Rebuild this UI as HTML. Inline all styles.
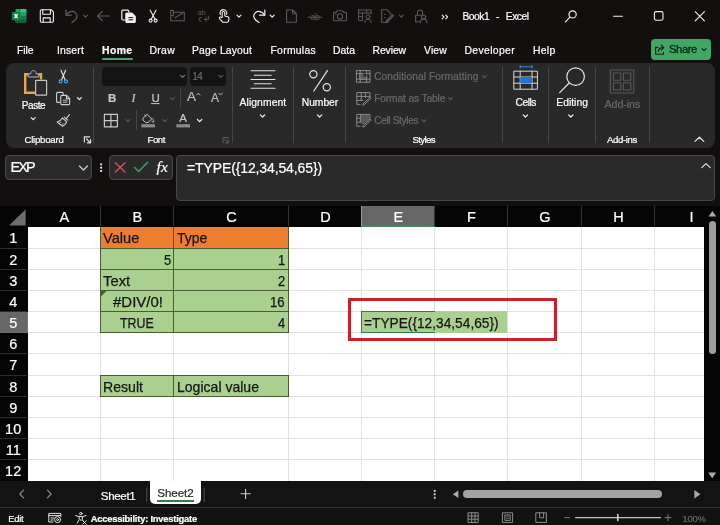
<!DOCTYPE html>
<html>
<head>
<meta charset="utf-8">
<title>Book1 - Excel</title>
<style>
*{box-sizing:border-box;margin:0;padding:0}
html,body{width:720px;height:525px;overflow:hidden;background:#120f0e;font-family:"Liberation Sans",sans-serif;color:#fff}
.abs{position:absolute}
#root{position:relative;width:720px;height:525px;overflow:hidden;background:#120f0e}
.t{position:absolute;white-space:pre;line-height:1;-webkit-text-stroke-width:0.2px}
.sep{position:absolute;width:1px;background:#464646;top:67px;height:76px}
.box{position:absolute;background:#2a2a2a;border:1px solid #484848;border-radius:4px}
</style>
</head>
<body>
<div id="root">
<!-- TITLE ICONS -->
<svg class="abs" style="left:0;top:0" width="720" height="34" viewBox="0 0 720 34" fill="none" stroke-linecap="round" stroke-linejoin="round">
  <!-- excel logo -->
  <rect x="15.5" y="9" width="10.8" height="13.6" rx="1" fill="#21a366" stroke="none"/>
  <rect x="20.8" y="9" width="5.5" height="3.5" fill="#33c481" stroke="none"/>
  <rect x="20.8" y="12.5" width="5.5" height="3.4" fill="#21a366" stroke="none"/>
  <rect x="20.8" y="15.9" width="5.5" height="3.4" fill="#107c41" stroke="none"/>
  <rect x="15.5" y="19.3" width="10.8" height="3.3" fill="#185c37" stroke="none"/>
  <rect x="11.8" y="12" width="8.6" height="8.2" rx="0.8" fill="#107c41" stroke="none"/>
  <path d="M14.5 14 L17.7 18.2 M17.7 14 L14.5 18.2" stroke="#fff" stroke-width="1.3" stroke-linecap="butt"/>
  <!-- save -->
  <g stroke="#f2f2f2" stroke-width="1.1">
    <path d="M40.3 10.9 a1.2 1.2 0 0 1 1.2 -1.2 h9.6 l2.3 2.3 v9 a1.2 1.2 0 0 1 -1.2 1.2 h-10.7 a1.2 1.2 0 0 1 -1.2 -1.2 z"/>
    <path d="M42.8 9.8 v4.4 h7.6 v-4.4"/>
    <path d="M43.2 22.1 v-4.2 h7 v4.2"/>
  </g>
  <!-- undo (dim) -->
  <g stroke="#5e5e5e" stroke-width="1.2">
    <path d="M66 10 v5.2 h5.2"/>
    <path d="M66.3 15 c2.2 -3.6 6.4 -4.6 9 -2.4 c3 2.6 1.6 6.2 -0.8 8 l-2.7 2"/>
    <path d="M83.4 15.2 l2 2 l2 -2"/>
  </g>
  <!-- back arrow (dim) -->
  <g stroke="#5e5e5e" stroke-width="1.2">
    <path d="M97.6 16 h12 M102.3 11.3 l-4.7 4.7 l4.7 4.7"/>
  </g>
  <!-- copy/paste -->
  <g stroke="#f2f2f2" stroke-width="1.2">
    <path d="M125 20 h-2 a1.2 1.2 0 0 1 -1.2 -1.2 v-7.4 a1.2 1.2 0 0 1 1.2 -1.2 h4.6 a1.2 1.2 0 0 1 1.2 1.2 v0.6"/>
    <path d="M126.8 13.2 h5.2 l3.2 3.2 v5 a0.9 0.9 0 0 1 -0.9 0.9 h-7.5 a0.9 0.9 0 0 1 -0.9 -0.9 v-7.3 a0.9 0.9 0 0 1 0.9 -0.9 z" fill="#f2f2f2"/>
    <path d="M128.8 17.6 h4 M128.8 19.8 h4" stroke="#111" stroke-width="1"/>
  </g>
  <!-- scissors -->
  <g stroke="#f2f2f2" stroke-width="1.1">
    <path d="M150.2 10.2 l4.8 9 M156 10.2 l-4.8 9"/>
    <circle cx="150.6" cy="20.6" r="1.5"/>
    <circle cx="155.6" cy="20.6" r="1.5"/>
  </g>
  <!-- picture/chart dim -->
  <g stroke="#5a5a5a" stroke-width="1.1">
    <path d="M174.5 12.3 h9.8 v8.4 h-13.6 v-4"/>
    <path d="M170.8 15.6 v-5.2 h2.6 v5.2 z"/>
    <path d="M175 17.8 l8 -5"/>
  </g>
  <!-- abc dim -->
  <text x="197.4" y="15.4" font-family="Liberation Sans, sans-serif" font-size="7.5" fill="#5a5a5a" stroke="none">ab</text>
  <g stroke="#5a5a5a" stroke-width="1">
    <path d="M204.6 19.4 h3.8 v-3.4 M204.4 19.4 l2 -1.8 M204.4 19.4 l2 1.8"/>
    <path d="M201 17.4 a1.9 1.9 0 1 0 0 3.8"/>
  </g>
  <!-- touch -->
  <g stroke="#f2f2f2" stroke-width="1.1">
    <path d="M222.2 17.4 v-4.6 a1.3 1.3 0 0 1 2.6 0 v3.2 l3 0.7 a1.6 1.6 0 0 1 1.2 1.8 l-0.5 2.6 a1.6 1.6 0 0 1 -1.6 1.2 h-3.2 a2 2 0 0 1 -1.5 -0.7 l-2.6 -3 a1 1 0 0 1 1.5 -1.3 z"/>
    <path d="M220.4 14.6 a3.4 3.4 0 1 1 6.2 -0.4"/>
    <path d="M237 15.2 l2 2 l2 -2"/>
  </g>
  <!-- redo -->
  <g stroke="#f2f2f2" stroke-width="1.2">
    <path d="M264.8 10 v5.2 h-5.2"/>
    <path d="M264.5 15 c-2.2 -3.6 -6.4 -4.6 -9 -2.4 c-3 2.6 -1.6 6.2 0.8 8 l2.7 2"/>
    <path d="M270.2 15.2 l2 2 l2 -2"/>
  </g>
  <!-- new doc dim -->
  <g stroke="#5a5a5a" stroke-width="1.1">
    <path d="M286.6 10 h6.2 l3.6 3.6 v8.6 h-9.8 z M292.6 10.2 v3.6 h3.6"/>
  </g>
  <!-- strikethrough dim -->
  <text x="310.4" y="20.4" font-family="Liberation Sans, sans-serif" font-size="8.5" fill="#5a5a5a" stroke="none">ab</text>
  <path d="M308.4 17.2 h13.4" stroke="#5a5a5a" stroke-width="1"/>
  <!-- camera dim -->
  <g stroke="#5a5a5a" stroke-width="1.1">
    <path d="M333.6 12.4 h2.6 l1 -1.6 h5.2 l1 1.6 h3 v8.4 h-12.8 z"/>
    <circle cx="340" cy="16.4" r="2.6"/>
    <path d="M335.4 14.3 h0.6"/>
  </g>
  <!-- table people dim -->
  <g stroke="#5a5a5a" stroke-width="1">
    <path d="M358.6 10 h12.6 v4 M358.6 10 v10.6 h4 M358.6 13 h12.6 M362.4 13 v7.6 M366.6 10 v3 M358.6 16.6 h4"/>
    <circle cx="368" cy="16.8" r="2"/>
    <path d="M364.6 22.6 a3.4 3.4 0 0 1 6.8 0"/>
  </g>
  <!-- doc pen dim -->
  <g stroke="#5a5a5a" stroke-width="1.1">
    <path d="M388 22.2 h-6.4 v-12.4 h5.6 l3.4 3.6 v1"/>
    <path d="M392.6 14.6 l-6.4 6.4 l-0.6 1.6 l1.8 -0.6 l6.2 -6.4 z"/>
    <path d="M384.6 14.4 h0.4 M384.6 17.6 h0.4"/>
    <path d="M399.4 15.2 l2 2 l2 -2"/>
  </g>
  <!-- lock person dim -->
  <g stroke="#5a5a5a" stroke-width="1.1">
    <path d="M419.4 21.8 h-3.8 v-6.6 h7.4 M417.4 15 v-2.4 a2.6 2.6 0 0 1 5.2 0 v1.6"/>
    <circle cx="423.6" cy="17" r="2"/>
    <path d="M420.2 22.6 a3.4 3.4 0 0 1 6.8 0"/>
  </g>
  <!-- >> -->
  <g stroke="#f2f2f2" stroke-width="1.1">
    <path d="M442.2 15.2 l1.8 1.8 l-1.8 1.8 M445.8 15.2 l1.8 1.8 l-1.8 1.8"/>
  </g>
  <!-- search -->
  <g stroke="#f2f2f2" stroke-width="1.2">
    <circle cx="572.6" cy="14.4" r="3.6"/>
    <path d="M570 17.2 l-4.6 4.6"/>
  </g>
  <!-- window controls -->
  <g stroke="#f2f2f2" stroke-width="1.1">
    <path d="M613.6 16.2 h8.8"/>
    <rect x="654.4" y="11.6" width="8.6" height="8.6" rx="1.6"/>
    <path d="M695.2 11.6 l9.2 9.2 M704.4 11.6 l-9.2 9.2"/>
  </g>
</svg>
<!-- TAB UNDERLINE / SHARE -->
<div class="abs" style="left:102px;top:57.5px;width:31px;height:2px;background:#4ea66e;border-radius:1px"></div>
<div class="abs" style="left:651px;top:39px;width:60px;height:21px;background:#41a663;border-radius:4px"></div>
<!-- RIBBON -->
<div class="abs" style="left:5.5px;top:63px;width:709.5px;height:85px;background:#292929;border-radius:8px"></div>
<div class="sep" style="left:93px"></div>
<div class="sep" style="left:232px"></div>
<div class="sep" style="left:293px"></div>
<div class="sep" style="left:345px"></div>
<div class="sep" style="left:502px"></div>
<div class="sep" style="left:548px"></div>
<div class="sep" style="left:595px"></div>
<div class="sep" style="left:649px"></div>
<div class="abs" style="left:101.5px;top:67px;width:85px;height:19px;background:#131313;border-radius:4px"></div>
<div class="abs" style="left:190px;top:67px;width:35.5px;height:19px;background:#131313;border-radius:4px"></div>
<!-- RIBBON ICONS -->
<svg class="abs" style="left:0;top:34px" width="720" height="120" viewBox="0 34 720 120" fill="none" stroke-linecap="round" stroke-linejoin="round">
  <!-- share icon -->
  <g stroke="#0c2414" stroke-width="1.1">
    <path d="M658 47.4 h-2.4 v6.8 h7.8 v-2"/>
    <path d="M658.2 51.6 c0.4 -2.8 2.2 -4 4.6 -4 M661.2 45 l2.6 2.6 l-2.6 2.6"/>
    <path d="M702 48.6 l2.1 2.1 l2.1 -2.1"/>
  </g>
  <!-- paste -->
  <g>
    <path d="M28.4 74.2 h-3.2 v18.6 h10 M38.8 74.2 h2.2 v5.4" stroke="#e2aa4c" stroke-width="2.4" stroke-linejoin="miter" stroke-linecap="butt"/>
    <path d="M28.2 76.6 v-2.6 h2.4 c0.2 -2 1.2 -3.4 2.9 -3.4 c1.7 0 2.7 1.4 2.9 3.4 h2.4 v2.6 z" stroke="#b8b8b8" stroke-width="1" fill="#2d2d2d"/>
    <rect x="35.6" y="80.4" width="11" height="14.8" rx="0.6" fill="#2b2b2b" stroke="#c4c4c4" stroke-width="1.2"/>
  </g>
  <path d="M31.2 117.6 l2 2 l2 -2" stroke="#f2f2f2" stroke-width="1.2"/>
  <!-- cut -->
  <g stroke-width="1.2">
    <path d="M61 70.2 l4 9.6 M65.6 70.2 l-4 9.6" stroke="#dcdcdc"/>
    <circle cx="60.6" cy="81.4" r="1.5" stroke="#4aa3e0"/>
    <circle cx="66" cy="81.4" r="1.5" stroke="#4aa3e0"/>
  </g>
  <!-- copy -->
  <g stroke="#d0d0d0" stroke-width="1.1">
    <path d="M59.6 102.4 h-2 a1 1 0 0 1 -1 -1 v-8 a1 1 0 0 1 1 -1 h4.6 a1 1 0 0 1 1 1 v1"/>
    <path d="M61.6 95.4 h5 l3 3 v5.4 a0.8 0.8 0 0 1 -0.8 0.8 h-7.2 a0.8 0.8 0 0 1 -0.8 -0.8 v-7.6 a0.8 0.8 0 0 1 0.8 -0.8 z M66.4 95.6 v3 h3"/>
    <path d="M63.4 100.2 h3.6 M63.4 102.2 h3.6" stroke-width="0.9"/>
    <path d="M77.4 97.6 l2 2 l2 -2" stroke="#f2f2f2" stroke-width="1.2"/>
  </g>
  <!-- format painter -->
  <g stroke="#d0d0d0" stroke-width="1.1">
    <path d="M69.4 114.6 l-3.4 4.2 M64.2 117.2 l3.6 3 M62.4 118 l4.2 3.6 c-0.6 2 -2 3.8 -4.4 4.6 l-5 -4.2 c2.4 -0.6 4 -2 5.2 -4 z"/>
    <path d="M59.4 123.4 l1.6 -1.4 M61.6 125 l1.4 -1.6" stroke-width="0.8"/>
  </g>
  <!-- clipboard launcher -->
  <g stroke="#e0e0e0" stroke-width="1.2">
    <path d="M89.6 136.8 h-5.2 v5.2 M86.6 139 l3.6 3.6 M90.6 139.6 v3.2 h-3.2"/>
  </g>
  <!-- font launcher dim -->
  <g stroke="#606060" stroke-width="1">
    <path d="M228 137.6 h-5 v5 M224.8 139.4 l3.4 3.4 M228.4 140.2 v2.8 h-2.8"/>
  </g>
  <!-- font box chevrons -->
  <g stroke="#7a7a7a" stroke-width="1.1">
    <path d="M180.6 75.4 l2 2 l2 -2"/>
    <path d="M218.8 75.4 l2 2 l2 -2" stroke="#5c5c5c"/>
  </g>
  <!-- U underline, chevrons -->
  <path d="M151.4 103.6 h7.8" stroke="#c8c8c8" stroke-width="1"/>
  <g stroke="#5c5c5c" stroke-width="1.1">
    <path d="M170.4 97.6 l2 2 l2 -2"/>
    <path d="M125.8 119.6 l2 2 l2 -2"/>
    <path d="M162.8 119.6 l2 2 l2 -2"/>
  </g>
  <path d="M197.4 119.4 l2.2 2.2 l2.2 -2.2" stroke="#f2f2f2" stroke-width="1.3"/>
  <path d="M180.5 89 v18.6 M136.5 110.6 v19.4" stroke="#464646" stroke-width="1"/>
  <!-- A^ Av carets -->
  <g stroke="#bdbdbd" stroke-width="1">
    <path d="M196.6 95 l1.7 -1.8 l1.7 1.8"/>
    <path d="M218.8 93.2 l1.7 1.8 l1.7 -1.8"/>
  </g>
  <!-- borders -->
  <g stroke="#c8c8c8" stroke-width="1.2">
    <rect x="104.4" y="114.4" width="13" height="12.4"/>
    <path d="M110.9 114.4 v12.4 M104.4 120.6 h13"/>
  </g>
  <!-- fill bucket -->
  <g stroke="#c8c8c8" stroke-width="1">
    <path d="M147.4 114.6 l4.4 4.4 l-3.8 3.6 h-2.4 l-2.6 -2.6 v-1.4 z M145.8 116.2 l-1 -1.4"/>
    <path d="M152.6 118.6 c1.2 1.4 1.6 2.4 1.2 3.2 c-0.6 0.6 -1.6 0.4 -1.8 -0.6"/>
  </g>
  <rect x="141.4" y="124.2" width="13.6" height="3.2" fill="#8a8a8a"/>
  <rect x="176.4" y="124.2" width="13.6" height="3.2" fill="#8a8a8a"/>
  <!-- alignment -->
  <g stroke="#e4e4e4" stroke-width="1.1">
    <path d="M251 70.8 h24 M254.4 75.2 h16.8 M251 79.5 h24 M254.4 83.8 h16.8 M251 88.2 h24"/>
    <path d="M260.4 114.8 l2.2 2.2 l2.2 -2.2" stroke="#f2f2f2" stroke-width="1.2"/>
    <path d="M317.4 114.8 l2.2 2.2 l2.2 -2.2" stroke="#f2f2f2" stroke-width="1.2"/>
    <path d="M523.2 114.8 l2.2 2.2 l2.2 -2.2" stroke="#f2f2f2" stroke-width="1.2"/>
    <path d="M568.6 114.8 l2.2 2.2 l2.2 -2.2" stroke="#f2f2f2" stroke-width="1.2"/>
  </g>
  <!-- percent -->
  <g stroke="#e4e4e4" stroke-width="1.2">
    <circle cx="313.4" cy="74.2" r="3.6"/>
    <circle cx="326.8" cy="87.2" r="3.6"/>
    <path d="M327.4 70.6 l-13.6 20.4"/>
  </g>
  <!-- styles icons (dim) -->
  <g stroke="#8a8a8a" stroke-width="1">
    <rect x="356.8" y="70.6" width="13.2" height="11.6"/>
    <path d="M356.8 73.6 h13.2 M356.8 79.2 h13.2 M360.2 70.6 v11.6 M366.6 70.6 v11.6"/>
    <rect x="360.2" y="73.6" width="6.4" height="5.6" fill="#5a5a5a"/>
    <path d="M363.4 73.6 h3.2 v2.8 h-3.2 z" fill="#2a2a2a" stroke="none"/>
    <path d="M370 98.4 v-5.8 h-13.2 v11.8 h3.4 M356.8 96.4 h13.2 M356.8 100.4 h6 M361.2 92.6 v8 M365.6 92.6 v5"/>
    <path d="M369.6 97.6 l-6.4 6.2 l-0.6 1.4 l1.6 -0.4 l6.4 -6.2 z" fill="#2a2a2a"/>
    <path d="M370 120.2 v-5.8 h-13.2 v11.8 h3.4 M356.8 118.2 h4 M356.8 122.2 h3 M360.4 114.4 v8"/>
    <path d="M361 115 h8.4 v4.4 l-5.6 4.6 h-2.8 z" fill="#5a5a5a" stroke="none"/>
    <path d="M369.6 119.4 l-6.4 6.2 l-0.6 1.4 l1.6 -0.4 l6.4 -6.2 z" fill="#2a2a2a"/>
  </g>
  <g stroke="#606060" stroke-width="1.1">
    <path d="M482.4 75.6 l2 2 l2 -2"/>
    <path d="M448.4 97.6 l2 2 l2 -2"/>
    <path d="M422 119.8 l2 2 l2 -2"/>
  </g>
  <!-- cells -->
  <g stroke="#d8d8d8" stroke-width="1">
    <rect x="514.2" y="71.2" width="23.2" height="18"/>
    <path d="M514.2 77 h23.2 M514.2 83.2 h23.2 M520.2 71.2 v18 M532 71.2 v18"/>
    <rect x="520.2" y="77" width="11.8" height="6.2" fill="#1e78d2" stroke="none"/>
    <path d="M520.2 66.8 h11.8 M520.2 65.4 v2.8 M532 65.4 v2.8" stroke="#3a8ee0" stroke-width="0.9"/>
  </g>
  <!-- editing magnifier -->
  <g stroke="#e4e4e4" stroke-width="1.2">
    <circle cx="575.6" cy="76.6" r="8.8"/>
    <path d="M569.2 83 l-9.6 9.6"/>
  </g>
  <!-- add-ins dim -->
  <g stroke="#5a5a5a" stroke-width="1.1">
    <rect x="610.4" y="70" width="23.4" height="23"/>
    <rect x="613.4" y="73" width="7.4" height="7.2"/>
    <rect x="623.4" y="73" width="7.4" height="7.2"/>
    <rect x="613.4" y="82.8" width="7.4" height="7.2"/>
    <rect x="623.4" y="82.8" width="7.4" height="7.2"/>
  </g>
  <!-- collapse -->
  <path d="M695 141.4 l4.4 -4.2 l4.4 4.2" stroke="#e4e4e4" stroke-width="1.2"/>
</svg>
<!-- FORMULA BAR -->
<div class="box" style="left:5px;top:155px;width:87px;height:25px"></div>
<div class="box" style="left:109px;top:155px;width:64px;height:25px"></div>
<div class="box" style="left:176px;top:155px;width:538.5px;height:46px"></div>
<!-- GRID -->
<div class="abs" style="left:0;top:206px;width:720px;height:275px;background:#050505"></div>
<div class="abs" style="left:27.5px;top:227px;width:676px;height:253.6px;background:#fff"></div>
<div class="abs" style="left:0;top:248px;width:27px;height:1px;background:#2c2c2c"></div>
<div class="abs" style="left:0;top:269px;width:27px;height:1px;background:#2c2c2c"></div>
<div class="abs" style="left:0;top:290px;width:27px;height:1px;background:#2c2c2c"></div>
<div class="abs" style="left:0;top:311px;width:27px;height:1px;background:#2c2c2c"></div>
<div class="abs" style="left:0;top:332px;width:27px;height:1px;background:#2c2c2c"></div>
<div class="abs" style="left:0;top:353px;width:27px;height:1px;background:#2c2c2c"></div>
<div class="abs" style="left:0;top:375px;width:27px;height:1px;background:#2c2c2c"></div>
<div class="abs" style="left:0;top:396px;width:27px;height:1px;background:#2c2c2c"></div>
<div class="abs" style="left:0;top:417px;width:27px;height:1px;background:#2c2c2c"></div>
<div class="abs" style="left:0;top:438px;width:27px;height:1px;background:#2c2c2c"></div>
<div class="abs" style="left:0;top:459px;width:27px;height:1px;background:#2c2c2c"></div>
<div class="abs" style="left:361px;top:206px;width:74px;height:21px;background:#676767;border-bottom:1px solid #3f8f63"></div>
<div class="abs" style="left:0;top:312px;width:28px;height:21px;background:#676767;border-right:1px solid #3f8f63"></div>
<svg class="abs" style="left:0;top:206px" width="28" height="21"><path d="M25.6 3.4 V19.4 H9 Z" fill="#6e6e6e"/></svg>
<div class="abs" style="left:100px;top:206px;width:1px;height:20px;background:#333"></div>
<div class="abs" style="left:173px;top:206px;width:1px;height:20px;background:#333"></div>
<div class="abs" style="left:288px;top:206px;width:1px;height:20px;background:#333"></div>
<div class="abs" style="left:361px;top:206px;width:1px;height:20px;background:#9a9a9a"></div>
<div class="abs" style="left:434px;top:206px;width:1px;height:20px;background:#333"></div>
<div class="abs" style="left:507px;top:206px;width:1px;height:20px;background:#333"></div>
<div class="abs" style="left:581px;top:206px;width:1px;height:20px;background:#333"></div>
<div class="abs" style="left:654px;top:206px;width:1px;height:20px;background:#333"></div>
<div class="abs" style="left:100px;top:227px;width:1px;height:254px;background:#e1e1e1"></div>
<div class="abs" style="left:173px;top:227px;width:1px;height:254px;background:#e1e1e1"></div>
<div class="abs" style="left:288px;top:227px;width:1px;height:254px;background:#e1e1e1"></div>
<div class="abs" style="left:361px;top:227px;width:1px;height:254px;background:#e1e1e1"></div>
<div class="abs" style="left:434px;top:227px;width:1px;height:254px;background:#e1e1e1"></div>
<div class="abs" style="left:507px;top:227px;width:1px;height:254px;background:#e1e1e1"></div>
<div class="abs" style="left:581px;top:227px;width:1px;height:254px;background:#e1e1e1"></div>
<div class="abs" style="left:654px;top:227px;width:1px;height:254px;background:#e1e1e1"></div>
<div class="abs" style="left:28px;top:248px;width:676px;height:1px;background:#e1e1e1"></div>
<div class="abs" style="left:28px;top:269px;width:676px;height:1px;background:#e1e1e1"></div>
<div class="abs" style="left:28px;top:290px;width:676px;height:1px;background:#e1e1e1"></div>
<div class="abs" style="left:28px;top:311px;width:676px;height:1px;background:#e1e1e1"></div>
<div class="abs" style="left:28px;top:332px;width:676px;height:1px;background:#e1e1e1"></div>
<div class="abs" style="left:28px;top:353px;width:676px;height:1px;background:#e1e1e1"></div>
<div class="abs" style="left:28px;top:375px;width:676px;height:1px;background:#e1e1e1"></div>
<div class="abs" style="left:28px;top:396px;width:676px;height:1px;background:#e1e1e1"></div>
<div class="abs" style="left:28px;top:417px;width:676px;height:1px;background:#e1e1e1"></div>
<div class="abs" style="left:28px;top:438px;width:676px;height:1px;background:#e1e1e1"></div>
<div class="abs" style="left:28px;top:459px;width:676px;height:1px;background:#e1e1e1"></div>
<div class="abs" style="left:100px;top:227px;width:74px;height:22px;background:#ed7d31;border:1px solid #4a5c33;border-top:none;border-bottom-color:#8f7a3c"></div>
<div class="abs" style="left:173px;top:227px;width:116px;height:22px;background:#ed7d31;border:1px solid #4a5c33;border-top:none;border-bottom-color:#8f7a3c"></div>
<div class="abs" style="left:100px;top:248px;width:74px;height:22px;background:#a9d08e;border:1px solid #4a5c33"></div>
<div class="abs" style="left:173px;top:248px;width:116px;height:22px;background:#a9d08e;border:1px solid #4a5c33"></div>
<div class="abs" style="left:100px;top:269px;width:74px;height:22px;background:#a9d08e;border:1px solid #4a5c33"></div>
<div class="abs" style="left:173px;top:269px;width:116px;height:22px;background:#a9d08e;border:1px solid #4a5c33"></div>
<div class="abs" style="left:100px;top:290px;width:74px;height:22px;background:#a9d08e;border:1px solid #4a5c33"></div>
<div class="abs" style="left:173px;top:290px;width:116px;height:22px;background:#a9d08e;border:1px solid #4a5c33"></div>
<div class="abs" style="left:100px;top:311px;width:74px;height:22px;background:#a9d08e;border:1px solid #4a5c33"></div>
<div class="abs" style="left:173px;top:311px;width:116px;height:22px;background:#a9d08e;border:1px solid #4a5c33"></div>
<div class="abs" style="left:100px;top:375px;width:74px;height:22px;background:#a9d08e;border:1px solid #4a5c33"></div>
<div class="abs" style="left:173px;top:375px;width:116px;height:22px;background:#a9d08e;border:1px solid #4a5c33"></div>
<svg class="abs" style="left:101px;top:291px" width="6" height="6"><path d="M0 0 H5.4 L0 5.4 Z" fill="#1c7434"/></svg>
<div class="abs" style="left:361px;top:311px;width:146px;height:22px;background:#a9d08e"></div>
<div class="abs" style="left:361px;top:311px;width:74px;height:22px;border:1px solid #2f7d4f;border-right:none"></div>
<div class="abs" style="left:347.5px;top:298px;width:209.5px;height:43px;border:3px solid #cb1f2c"></div><!-- right scrollbar -->
<div class="abs" style="left:709px;top:221px;width:6.5px;height:133px;background:#9c9c9c;border-radius:3.5px"></div>
<!-- SHEET TABS -->
<div class="abs" style="left:0;top:480.6px;width:720px;height:27px;background:#131313"></div>
<div class="abs" style="left:149.8px;top:480.6px;width:51.7px;height:23.9px;background:#fff;border-radius:0 0 5px 5px"></div>
<div class="abs" style="left:157px;top:499.8px;width:36.5px;height:1.8px;background:#2e7d4f"></div>
<div class="abs" style="left:463px;top:490.4px;width:198.5px;height:7.6px;background:#a2a2a2;border-radius:4px"></div>
<!-- STATUS BAR -->
<div class="abs" style="left:0;top:507px;width:720px;height:18px;background:#121212;border-top:1px solid #353535"></div>
<svg class="abs" style="left:0;top:150px" width="720" height="375" viewBox="0 150 720 375" fill="none" stroke-linecap="round" stroke-linejoin="round">
  <!-- name box chevron -->
  <path d="M79.4 166 l4 4 l4 -4" stroke="#d0d0d0" stroke-width="1.2"/>
  <!-- dots -->
  <g fill="#e8e8e8"><rect x="100.2" y="163.4" width="1.9" height="1.9"/><rect x="100.2" y="166.7" width="1.9" height="1.9"/><rect x="100.2" y="170" width="1.9" height="1.9"/></g>
  <!-- cancel / enter -->
  <path d="M115.4 162.8 l9.6 9.2 M125 162.8 l-9.6 9.2" stroke="#d8525c" stroke-width="1.3"/>
  <path d="M134.6 167.4 l4 4 l9 -9.2" stroke="#3fa566" stroke-width="1.4"/>
  <!-- formula expand -->
  <path d="M701.8 167.6 l4.2 -4 l4.2 4" stroke="#e4e4e4" stroke-width="1.2"/>
  <!-- v scroll arrows -->
  <path d="M708.6 216.4 l3.8 -5.4 l3.8 5.4 z" fill="#ababab"/>
  <path d="M708.2 472.6 l4 5.6 l4 -5.6 z" fill="#ababab"/>
  <!-- h scroll arrows -->
  <path d="M458.4 490.4 v7.6 l-5.6 -3.8 z" fill="#ababab"/>
  <path d="M694.4 490 v8.4 l6 -4.2 z" fill="#ababab"/>
  <g fill="#e8e8e8"><rect x="433.8" y="490" width="1.8" height="1.8"/><rect x="433.8" y="493.4" width="1.8" height="1.8"/><rect x="433.8" y="496.8" width="1.8" height="1.8"/></g>
  <!-- sheet nav -->
  <g stroke="#8c8c8c" stroke-width="1.2">
    <path d="M23.6 490.2 l-3.8 3.8 l3.8 3.8"/>
    <path d="M47.4 490.2 l3.8 3.8 l-3.8 3.8"/>
  </g>
  <path d="M146.8 488 v13.6 M204.2 488 v13.6" stroke="#505050" stroke-width="1"/>
  <path d="M241 493.8 h9.2 M245.6 489.2 v9.2" stroke="#d0d0d0" stroke-width="1.1"/>
  <!-- status icons -->
  <g stroke="#e4e4e4" stroke-width="1">
    <path d="M53 522 h-4.2 v-8.6 h12 v3 M48.8 515.6 h12 M51 518 h3 M51 520 h2"/>
    <circle cx="57.6" cy="519.6" r="3"/><circle cx="57.6" cy="519.6" r="1" />
  </g>
  <g stroke="#e4e4e4" stroke-width="1">
    <circle cx="80.8" cy="513.6" r="1.2"/>
    <path d="M75.6 515.6 l3.6 1 v3 l-2 3.6 M86 515.6 l-3.6 1 v3 l1 1.6 M79.2 516.6 h3.2 M80.8 519.6 v1"/>
    <path d="M82.6 520.6 l3.8 3.6 M86.4 520.6 l-3.8 3.6" stroke-width="0.9"/>
  </g>
  <!-- view icons -->
  <g stroke="#8c8c8c" stroke-width="1">
    <rect x="468.4" y="512.8" width="9.8" height="9.6"/>
    <path d="M471.7 512.8 v9.6 M475 512.8 v9.6 M468.4 516 h9.8 M468.4 519.2 h9.8"/>
    <rect x="502.8" y="512.8" width="9.8" height="9.6"/>
    <rect x="505.2" y="515" width="5" height="5.4"/>
    <path d="M506.4 516.8 h2.6 M506.4 518.6 h2.6" stroke-width="0.7"/>
    <rect x="536.2" y="512.8" width="10.2" height="9.6"/>
    <path d="M539.6 512.8 v5 h4 v-5"/>
  </g>
  <!-- zoom slider -->
  <g stroke="#7c7c7c" stroke-width="1">
    <path d="M564.8 517.6 h4.4"/>
    <path d="M575.6 517.6 h85" stroke="#c0c0c0" stroke-width="1.2"/>
    <path d="M617.8 514.6 v6" stroke="#d0d0d0" stroke-width="1.6"/>
    <path d="M665 517.6 h6 M668 514.6 v6"/>
  </g>
</svg>

<!-- TEXT -->
<div class="abs" style="left:0;top:0;width:720px;height:525px;will-change:transform">
<div class="t" style='left:462.5px;top:11.5px;font-size:10.3px;color:#fff;letter-spacing:-0.50px;word-spacing:4.5px;'>Book1 - Excel</div>
<div class="t" style='left:17.0px;top:45.5px;font-size:10.4px;color:#fff;letter-spacing:-0.06px;'>File</div>
<div class="t" style='left:57.0px;top:45.5px;font-size:10.4px;color:#fff;letter-spacing:0.17px;'>Insert</div>
<div class="t" style='left:102.0px;top:45.5px;font-size:10.4px;color:#fff;font-weight:bold;letter-spacing:0.41px;'>Home</div>
<div class="t" style='left:149.5px;top:45.5px;font-size:10.4px;color:#fff;letter-spacing:0.31px;'>Draw</div>
<div class="t" style='left:192.0px;top:45.5px;font-size:10.4px;color:#fff;letter-spacing:0.15px;'>Page Layout</div>
<div class="t" style='left:270.5px;top:45.5px;font-size:10.4px;color:#fff;letter-spacing:0.27px;'>Formulas</div>
<div class="t" style='left:333.0px;top:45.5px;font-size:10.4px;color:#fff;letter-spacing:0.01px;'>Data</div>
<div class="t" style='left:372.5px;top:45.5px;font-size:10.4px;color:#fff;letter-spacing:-0.10px;'>Review</div>
<div class="t" style='left:424.0px;top:45.5px;font-size:10.4px;color:#fff;letter-spacing:0.16px;'>View</div>
<div class="t" style='left:464.5px;top:45.5px;font-size:10.4px;color:#fff;letter-spacing:0.35px;'>Developer</div>
<div class="t" style='left:533.0px;top:45.5px;font-size:10.4px;color:#fff;letter-spacing:0.28px;'>Help</div>
<div class="t" style='left:669.1px;top:44.3px;font-size:11.3px;color:#0c2414;letter-spacing:-0.51px;-webkit-text-stroke-width:0.3px;'>Share</div>
<div class="t" style='left:21.8px;top:100.6px;font-size:10px;color:#fff;letter-spacing:-0.44px;'>Paste</div>
<div class="t" style='left:24.5px;top:134.9px;font-size:9.6px;color:#fff;letter-spacing:-0.23px;'>Clipboard</div>
<div class="t" style='left:147.5px;top:134.9px;font-size:9.6px;color:#fff;letter-spacing:-0.43px;'>Font</div>
<div class="t" style='left:412.5px;top:134.9px;font-size:9.6px;color:#fff;letter-spacing:-0.61px;'>Styles</div>
<div class="t" style='left:607.0px;top:134.9px;font-size:9.6px;color:#fff;letter-spacing:-0.36px;'>Add-ins</div>
<div class="t" style='left:192.2px;top:71.6px;font-size:10.2px;color:#666;letter-spacing:-0.87px;'>14</div>
<div class="t" style='left:108.0px;top:92.6px;font-size:11.5px;color:#c8c8c8;font-weight:bold;letter-spacing:-1.81px;'>B</div>
<div class="t" style='left:131.5px;top:92.1px;font-size:12px;color:#c8c8c8;font-style:italic;font-family:"Liberation Serif",serif;letter-spacing:0.50px;'>I</div>
<div class="t" style='left:151.5px;top:92.6px;font-size:11.5px;color:#c8c8c8;letter-spacing:-0.31px;'>U</div>
<div class="t" style='left:187.0px;top:90.4px;font-size:13.5px;color:#bdbdbd;letter-spacing:-0.02px;'>A</div>
<div class="t" style='left:211.0px;top:91.6px;font-size:12px;color:#bdbdbd;letter-spacing:-0.02px;'>A</div>
<div class="t" style='left:179.3px;top:113.1px;font-size:11.5px;color:#c8c8c8;letter-spacing:0.83px;'>A</div>
<div class="t" style='left:239.5px;top:97.9px;font-size:10.3px;color:#fff;letter-spacing:0.11px;'>Alignment</div>
<div class="t" style='left:301.8px;top:97.9px;font-size:10.3px;color:#fff;letter-spacing:-0.05px;'>Number</div>
<div class="t" style='left:374.2px;top:71.7px;font-size:10.2px;color:#6a6a6a;letter-spacing:0.08px;'>Conditional Formatting</div>
<div class="t" style='left:374.2px;top:93.7px;font-size:10.2px;color:#6a6a6a;letter-spacing:-0.12px;'>Format as Table</div>
<div class="t" style='left:374.2px;top:116.0px;font-size:10.2px;color:#6a6a6a;letter-spacing:-0.38px;'>Cell Styles</div>
<div class="t" style='left:515.6px;top:97.9px;font-size:10.3px;color:#fff;letter-spacing:-0.50px;'>Cells</div>
<div class="t" style='left:556.3px;top:97.9px;font-size:10.3px;color:#fff;letter-spacing:0.02px;'>Editing</div>
<div class="t" style='left:604.6px;top:99.2px;font-size:10.6px;color:#6a6a6a;letter-spacing:-0.05px;'>Add-ins</div>
<div class="t" style='left:10.4px;top:160.3px;font-size:14.5px;color:#fff;letter-spacing:-1.81px;'>EXP</div>
<div class="t" style='left:187.0px;top:161.3px;font-size:14px;color:#fff;letter-spacing:-0.12px;'>=TYPE({12,34,54,65})</div>
<div class="t" style='left:100.8px;top:489.7px;font-size:11.6px;color:#fff;letter-spacing:-0.36px;'>Sheet1</div>
<div class="t" style='left:157.3px;top:487.0px;font-size:11.6px;color:#262626;letter-spacing:-0.09px;'>Sheet2</div>
<div class="t" style='left:156.5px;top:159.3px;font-size:15.5px;color:#fff;font-style:italic;font-family:"Liberation Serif",serif;letter-spacing:0.31px;'>fx</div>
<div class="t" style='left:8.3px;top:513.6px;font-size:9.4px;color:#fff;letter-spacing:-0.29px;'>Edit</div>
<div class="t" style='left:90.7px;top:513.6px;font-size:9.4px;color:#fff;font-weight:bold;letter-spacing:-0.22px;'>Accessibility: Investigate</div>
<div class="t" style='left:682.5px;top:513.6px;font-size:9.4px;color:#6a6a6a;letter-spacing:-0.25px;'>100%</div>
<div class="t" style='left:64.4px;top:209.7px;font-size:14.5px;color:#fff;transform:translateX(-50%);'>A</div>
<div class="t" style='left:137.4px;top:209.7px;font-size:14.5px;color:#fff;transform:translateX(-50%);'>B</div>
<div class="t" style='left:231.4px;top:209.7px;font-size:14.5px;color:#fff;transform:translateX(-50%);'>C</div>
<div class="t" style='left:325.4px;top:209.7px;font-size:14.5px;color:#fff;transform:translateX(-50%);'>D</div>
<div class="t" style='left:398.4px;top:209.7px;font-size:14.5px;color:#fff;transform:translateX(-50%);'>E</div>
<div class="t" style='left:471.4px;top:209.7px;font-size:14.5px;color:#fff;transform:translateX(-50%);'>F</div>
<div class="t" style='left:544.9px;top:209.7px;font-size:14.5px;color:#fff;transform:translateX(-50%);'>G</div>
<div class="t" style='left:618.4px;top:209.7px;font-size:14.5px;color:#fff;transform:translateX(-50%);'>H</div>
<div class="t" style='left:691.4px;top:209.7px;font-size:14.5px;color:#fff;transform:translateX(-50%);'>I</div>
<div class="t" style='left:13.2px;top:231.4px;font-size:14.5px;color:#fff;transform:translateX(-50%);'>1</div>
<div class="t" style='left:13.2px;top:252.9px;font-size:14.5px;color:#fff;transform:translateX(-50%);'>2</div>
<div class="t" style='left:13.2px;top:273.9px;font-size:14.5px;color:#fff;transform:translateX(-50%);'>3</div>
<div class="t" style='left:13.2px;top:294.9px;font-size:14.5px;color:#fff;transform:translateX(-50%);'>4</div>
<div class="t" style='left:13.2px;top:315.9px;font-size:14.5px;color:#fff;transform:translateX(-50%);'>5</div>
<div class="t" style='left:13.2px;top:336.9px;font-size:14.5px;color:#fff;transform:translateX(-50%);'>6</div>
<div class="t" style='left:13.2px;top:358.4px;font-size:14.5px;color:#fff;transform:translateX(-50%);'>7</div>
<div class="t" style='left:13.2px;top:379.9px;font-size:14.5px;color:#fff;transform:translateX(-50%);'>8</div>
<div class="t" style='left:13.2px;top:400.9px;font-size:14.5px;color:#fff;transform:translateX(-50%);'>9</div>
<div class="t" style='left:13.2px;top:421.9px;font-size:14.5px;color:#fff;transform:translateX(-50%);'>10</div>
<div class="t" style='left:13.2px;top:442.9px;font-size:14.5px;color:#fff;transform:translateX(-50%);'>11</div>
<div class="t" style='left:13.2px;top:464.4px;font-size:14.5px;color:#fff;transform:translateX(-50%);'>12</div>
<div class="t" style='left:103.0px;top:230.9px;font-size:14.3px;color:#151515;transform-origin:0 0;transform:scaleX(1.0221);-webkit-text-stroke:0.25px #151515;'>Value</div>
<div class="t" style='left:177.0px;top:230.9px;font-size:14.3px;color:#151515;transform-origin:0 0;transform:scaleX(0.9774);-webkit-text-stroke:0.25px #151515;'>Type</div>
<div class="t" style='left:103.3px;top:273.9px;font-size:14.3px;color:#151515;transform-origin:0 0;transform:scaleX(1.0368);-webkit-text-stroke:0.25px #151515;'>Text</div>
<div class="t" style='left:112.8px;top:294.9px;font-size:14.3px;color:#151515;transform-origin:0 0;transform:scaleX(1.0485);-webkit-text-stroke:0.25px #151515;'>#DIV/0!</div>
<div class="t" style='left:120.3px;top:315.9px;font-size:14.3px;color:#151515;transform-origin:0 0;transform:scaleX(0.8684);-webkit-text-stroke:0.25px #151515;'>TRUE</div>
<div class="t" style='left:103.0px;top:379.9px;font-size:14.3px;color:#151515;transform-origin:0 0;transform:scaleX(0.9869);-webkit-text-stroke:0.25px #151515;'>Result</div>
<div class="t" style='left:177.0px;top:379.9px;font-size:14.3px;color:#151515;transform-origin:0 0;transform:scaleX(0.9824);-webkit-text-stroke:0.25px #151515;'>Logical value</div>
<div class="t" style='left:163.5px;top:252.9px;font-size:14.3px;color:#151515;transform-origin:0 0;transform:scaleX(0.9053);-webkit-text-stroke:0.25px #151515;'>5</div>
<div class="t" style='left:278.0px;top:252.9px;font-size:14.3px;color:#151515;transform-origin:0 0;transform:scaleX(0.9053);-webkit-text-stroke:0.25px #151515;'>1</div>
<div class="t" style='left:278.0px;top:273.9px;font-size:14.3px;color:#151515;transform-origin:0 0;transform:scaleX(0.9053);-webkit-text-stroke:0.25px #151515;'>2</div>
<div class="t" style='left:270.3px;top:294.9px;font-size:14.3px;color:#151515;transform-origin:0 0;transform:scaleX(0.9179);-webkit-text-stroke:0.25px #151515;'>16</div>
<div class="t" style='left:278.0px;top:315.9px;font-size:14.3px;color:#151515;transform-origin:0 0;transform:scaleX(0.9053);-webkit-text-stroke:0.25px #151515;'>4</div>
<div class="t" style='left:364.2px;top:315.9px;font-size:14.3px;color:#151515;transform-origin:0 0;transform:scaleX(0.9594);-webkit-text-stroke:0.25px #151515;'>=TYPE({12,34,54,65})</div>
</div>
</div>
</body>
</html>
